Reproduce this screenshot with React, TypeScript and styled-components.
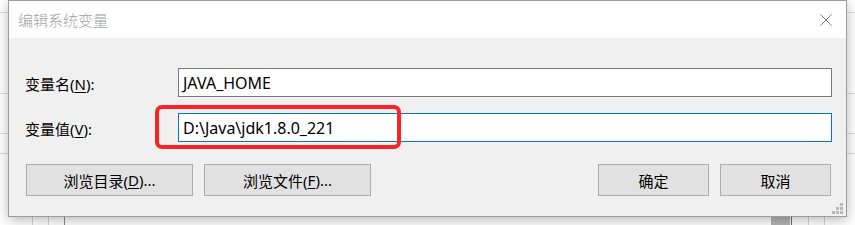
import React from "react";
import styled, { createGlobalStyle } from "styled-components";

const Global = createGlobalStyle`
  html, body {
    margin: 0;
    padding: 0;
    background: #ffffff;
  }
  body {
    font-family: "Segoe UI", "Noto Sans", "Noto Sans CJK SC", sans-serif;
  }
`;

// the window sitting behind the dialog: a few grid lines peeking out
const Backdrop = styled.div`
  width: 855px;
  height: 225px;
  box-sizing: border-box;
  padding-left: 8px;
  overflow: hidden;
  background-color: #ffffff;
  background-repeat: no-repeat;
  background-image:
    linear-gradient(#dcdcdc, #dcdcdc),
    linear-gradient(#dcdcdc, #dcdcdc),
    linear-gradient(#dcdcdc, #dcdcdc),
    linear-gradient(#dcdcdc, #dcdcdc),
    linear-gradient(#d6d6d6, #d6d6d6),
    linear-gradient(#d6d6d6, #d6d6d6),
    linear-gradient(#8a8a8a, #8a8a8a),
    linear-gradient(#b4b4b4, #b4b4b4),
    linear-gradient(#6a6a6a, #6a6a6a),
    linear-gradient(#d6d6d6, #d6d6d6),
    linear-gradient(#d6d6d6, #d6d6d6);
  background-position:
    0 12px,
    0 133px,
    0 153px,
    0 93px,
    32px 0,
    48px 0,
    64px 0,
    771px 217px,
    791px 0,
    808px 0,
    824px 0;
  background-size:
    100% 1px,
    100% 1px,
    100% 1px,
    100% 1px,
    1px 100%,
    1px 100%,
    1px 100%,
    19px 8px,
    1px 100%,
    1px 100%,
    1px 100%;
`;

const Dialog = styled.div`
  position: relative;
  width: 839px;
  height: 217px;
  box-sizing: border-box;
  border: 1px solid #9c9c9c;
  background: #f0f0f0;
  box-shadow: 0 3px 12px rgba(0, 0, 0, 0.28);
  display: flex;
  flex-direction: column;
`;

const TitleBar = styled.div`
  height: 37px;
  background: #ffffff;
  display: flex;
  align-items: center;
  padding-left: 9px;
  padding-right: 14px;
`;

const Title = styled.div`
  flex: 1;
  font-size: 15px;
  color: #a0a0a0;
  font-family: "Noto Sans CJK SC", sans-serif;
  font-weight: 300;
`;

const Body = styled.div`
  flex: 1;
  padding: 30px 14px 0 16px;
  display: flex;
  flex-direction: column;
`;

const Row = styled.div<{ $gap?: number }>`
  display: grid;
  grid-template-columns: 153px 1fr;
  align-items: center;
  height: 29px;
  margin-top: ${(p) => p.$gap ?? 0}px;
`;

const Label = styled.label`
  font-size: 15px;
  color: #000;
  padding-top: 1px;
`;

const Field = styled.div`
  height: 29px;
  box-sizing: border-box;
  border: 1px solid #7a7a7a;
  background: #ffffff;
  padding-left: 4px;
  display: flex;
  align-items: center;
  font-size: 16px;
  color: #000;
`;

const FocusedField = styled(Field)`
  border-color: #0078d7;
`;

const ButtonRow = styled.div`
  display: flex;
  gap: 11px;
  margin-top: 22px;
  margin-left: 1px;
  margin-right: 1px;
`;

const Spacer = styled.div`
  flex: 1;
`;

const Button = styled.div<{ $w: number }>`
  width: ${(p) => p.$w}px;
  height: 32px;
  box-sizing: border-box;
  border: 1px solid #adadad;
  background: #e1e1e1;
  display: flex;
  align-items: center;
  justify-content: center;
  font-size: 15px;
  color: #000;
`;

const Key = styled.span`
  text-decoration: underline;
  text-underline-offset: 2px;
  text-decoration-thickness: 1px;
`;

// red annotation drawn over the screenshot
const Highlight = styled.div`
  position: absolute;
  left: 146px;
  top: 104px;
  width: 246px;
  height: 44px;
  box-sizing: border-box;
  border: 4px solid #fa2424;
  border-radius: 7px;
  pointer-events: none;
`;

const Grip = styled.svg`
  position: absolute;
  right: 2px;
  bottom: 2px;
`;

const CloseIcon = () => (
  <svg width="12" height="12" viewBox="0 0 12 12">
    <path d="M0.5 0.5 L11.5 11.5 M11.5 0.5 L0.5 11.5" stroke="#7a7a7a" strokeWidth="1" fill="none" />
  </svg>
);

export default function App() {
  return (
    <>
      <Global />
      <Backdrop>
        <Dialog>
          <TitleBar>
            <Title>编辑系统变量</Title>
            <CloseIcon />
          </TitleBar>
          <Body>
            <Row>
              <Label>
                变量名(<Key>N</Key>):
              </Label>
              <Field>JAVA_HOME</Field>
            </Row>
            <Row $gap={16}>
              <Label>
                变量值(<Key>V</Key>):
              </Label>
              <FocusedField>D:\Java\jdk1.8.0_221</FocusedField>
            </Row>
            <ButtonRow>
              <Button $w={167}>
                浏览目录(<Key>D</Key>)...
              </Button>
              <Button $w={167}>
                浏览文件(<Key>F</Key>)...
              </Button>
              <Spacer />
              <Button $w={111}>确定</Button>
              <Button $w={111}>取消</Button>
            </ButtonRow>
          </Body>
          <Highlight />
          <Grip width="12" height="11" viewBox="0 0 12 11">
            <g fill="#b8b8b8">
              <rect x="8" y="0" width="3" height="3" />
              <rect x="4" y="4" width="3" height="3" />
              <rect x="8" y="4" width="3" height="3" />
              <rect x="0" y="8" width="3" height="3" />
              <rect x="4" y="8" width="3" height="3" />
              <rect x="8" y="8" width="3" height="3" />
            </g>
          </Grip>
        </Dialog>
      </Backdrop>
    </>
  );
}
